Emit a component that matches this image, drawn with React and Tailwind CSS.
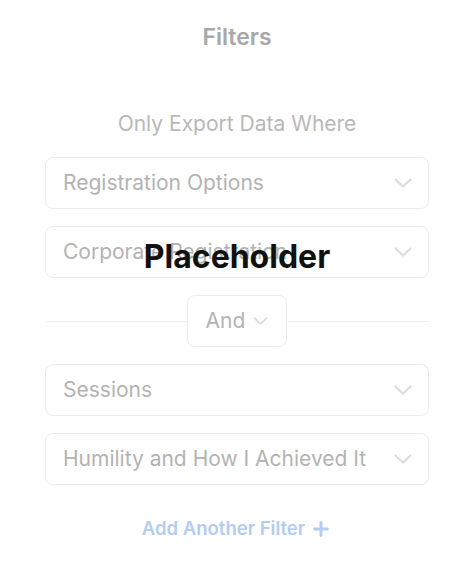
import { Plus } from 'lucide-react';

function Chevron({ className }) {
  return (
    <svg className={className} viewBox="0 0 18 10" fill="none" stroke="currentColor" strokeWidth="2.2" strokeLinecap="round" strokeLinejoin="round">
      <path d="M1.5 1.5l7.5 7 7.5-7" />
    </svg>
  );
}

function Select({ label }) {
  return (
    <div className="flex h-[52px] items-center justify-between rounded-lg border border-[#ececec] bg-white pl-[17px] pr-[16px]">
      <span className="text-[21px] text-[#b3b3b3]">{label}</span>
      <Chevron className="h-[10px] w-[18px] text-[#dcdcdc]" />
    </div>
  );
}

function App() {
  return (
    <div className="relative min-h-screen bg-white" style={{ fontFamily: 'Inter, "Noto Sans", sans-serif' }}>
      <div className="flex flex-col px-[45px]">
        <h1 className="mt-[20px] text-center text-[23px] font-semibold text-[#a8a8a8]">Filters</h1>
        <p className="mt-[53px] text-center text-[21px] text-[#b8b8b8]">Only Export Data Where</p>
        <div className="mt-[18px] flex flex-col gap-[17px]">
          <Select label="Registration Options" />
          <Select label="Corporate Registration" />
        </div>
        <div className="relative my-[17px] flex justify-center">
          <div className="absolute inset-x-0 top-1/2 border-t border-[#f2f2f2]" />
          <div className="relative flex h-[52px] w-[100px] items-center justify-center gap-[8px] rounded-lg border border-[#ececec] bg-white">
            <span className="text-[21px] text-[#b3b3b3]">And</span>
            <Chevron className="h-[8px] w-[15px] text-[#dcdcdc]" />
          </div>
        </div>
        <div className="flex flex-col gap-[17px]">
          <Select label="Sessions" />
          <Select label="Humility and How I Achieved It" />
        </div>
        <button className="mt-[30px] flex items-center justify-center gap-[5px] text-[18.5px] font-semibold text-[#b2cdef]">
          Add Another Filter
          <Plus className="h-[22px] w-[22px]" strokeWidth={3.2} />
        </button>
      </div>
      <div className="absolute left-0 right-0 top-[233px] text-center text-[32px] font-bold text-[#111]">Placeholder</div>
    </div>
  );
}

export default App;
